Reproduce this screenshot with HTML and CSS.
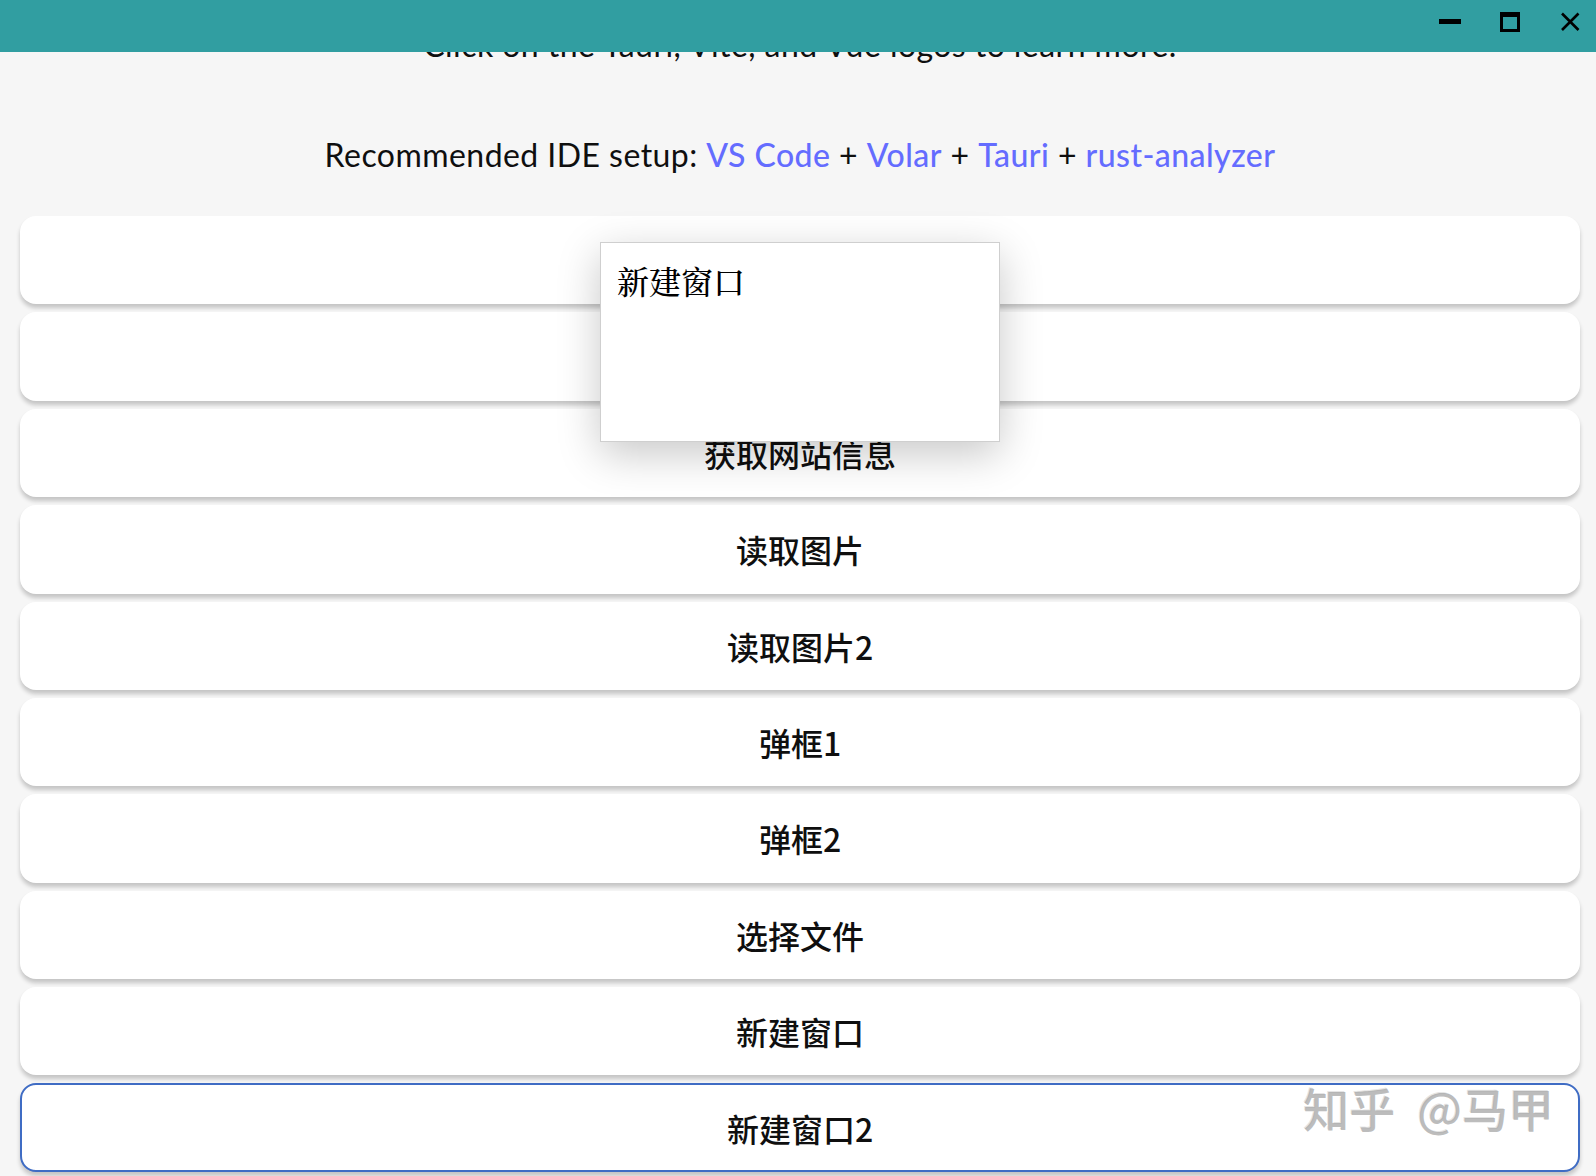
FILE: index.html
```html
<!DOCTYPE html>
<html lang="zh-CN">
<head>
<meta charset="utf-8">
<title>Tauri App</title>
<link rel="stylesheet" href="styles.css">
</head>
<body>
<div class="window">
  <header class="titlebar">
    <div class="controls">
      <span class="ctl">
        <svg width="22" height="20" viewBox="0 0 22 20"><rect x="0" y="7" width="22" height="5" fill="#000"/></svg>
      </span>
      <span class="ctl">
        <svg width="20" height="20" viewBox="0 0 20 20"><rect x="1.5" y="1.5" width="17" height="17" fill="none" stroke="#000" stroke-width="3"/><rect x="0" y="0" width="20" height="5" fill="#000"/></svg>
      </span>
      <span class="ctl">
        <svg width="20" height="20" viewBox="0 0 20 20"><path d="M2 1.5 L18.5 18 M18.5 1.5 L2 18" stroke="#000" stroke-width="2.6" fill="none"/></svg>
      </span>
    </div>
  </header>
  <main class="viewport">
    <div class="content">
      <p class="click">Click on the Tauri, Vite, and Vue logos to learn more.</p>
      <p class="recommended">Recommended IDE setup: <a href="#">VS Code</a> + <a href="#">Volar</a> + <a href="#">Tauri</a> + <a href="#">rust-analyzer</a></p>
      <div class="actions">
        <button class="btn">问候</button>
        <button class="btn">获取系统信息</button>
        <button class="btn">获取网站信息</button>
        <button class="btn">读取图片</button>
        <button class="btn">读取图片2</button>
        <button class="btn">弹框1</button>
        <button class="btn">弹框2</button>
        <button class="btn">选择文件</button>
        <button class="btn">新建窗口</button>
        <button class="btn btn-focus">新建窗口2</button>
      </div>
    </div>
  </main>
  <div class="popup">
    <div class="popup-body">新建窗口</div>
  </div>
  <div class="watermark">知乎<span class="wm-at">@马甲</span></div>
</div>
</body>
</html>
```
FILE: styles.css
```css
html, body {
  margin: 0;
  padding: 0;
  height: 100%;
  overflow: hidden;
}

body {
  background: #f6f6f6;
  color: #0f0f0f;
  font-family: Lato, "Noto Sans", "Noto Sans CJK SC", sans-serif;
}

.window {
  position: relative;
  height: 1176px;
  display: flex;
  flex-direction: column;
}

.titlebar {
  height: 52px;
  flex: 0 0 52px;
  background: #319ea1;
  display: flex;
  justify-content: flex-end;
  align-items: flex-start;
  padding: 12px 6px 0 0;
  box-sizing: border-box;
  position: relative;
  z-index: 2;
}

.controls {
  display: flex;
  gap: 20px;
}

.ctl {
  width: 40px;
  height: 20px;
  display: flex;
  justify-content: center;
  align-items: center;
}

.ctl svg {
  display: block;
}

.viewport {
  flex: 1;
  overflow: hidden;
}

.content {
  margin-top: -31px;
  padding: 0 16px 0 20px;
}

.click,
.recommended {
  margin: 0;
  font-size: 32px;
  line-height: 48px;
  text-align: center;
  font-weight: 400;
  letter-spacing: 0.45px;
}

.recommended {
  margin-top: 62px;
}

.recommended a {
  color: #646cff;
  text-decoration: none;
  font-weight: 500;
}

.actions {
  margin-top: 37px;
  display: flex;
  flex-direction: column;
  gap: 8px;
}

.btn {
  display: block;
  width: 100%;
  box-sizing: border-box;
  padding: 18.2px 38.4px;
  border: 2px solid transparent;
  border-radius: 16px;
  background: #ffffff;
  color: #0f0f0f;
  font-family: "Noto Sans CJK SC", "Noto Sans", sans-serif;
  font-size: 32px;
  font-weight: 500;
  line-height: 48px;
  text-align: center;
  box-shadow: 0 4px 4px rgba(0, 0, 0, 0.2);
}

.btn-focus {
  border-color: #3f6cc4;
}

.popup {
  position: absolute;
  left: 600px;
  top: 242px;
  width: 400px;
  height: 200px;
  box-sizing: border-box;
  background: #ffffff;
  border: 1px solid #cfcfcf;
  box-shadow: 0 12px 40px rgba(0, 0, 0, 0.22);
  z-index: 3;
}

.popup-body {
  padding: 14px 16px;
  font-family: "Noto Serif CJK SC", "Liberation Serif", "Noto Sans CJK SC", serif;
  font-size: 32px;
  font-weight: 500;
  color: #000;
}

.watermark {
  position: absolute;
  right: 42px;
  bottom: 36px;
  font-family: "Noto Sans CJK SC", sans-serif;
  font-size: 46px;
  font-weight: 500;
  color: rgba(160, 160, 160, 0.7);
  text-shadow: 1px 1px 0 rgba(255, 255, 255, 0.9), -1px -1px 0 rgba(120, 120, 120, 0.2);
  z-index: 4;
  white-space: nowrap;
}

.wm-at {
  margin-left: 22px;
}
```
